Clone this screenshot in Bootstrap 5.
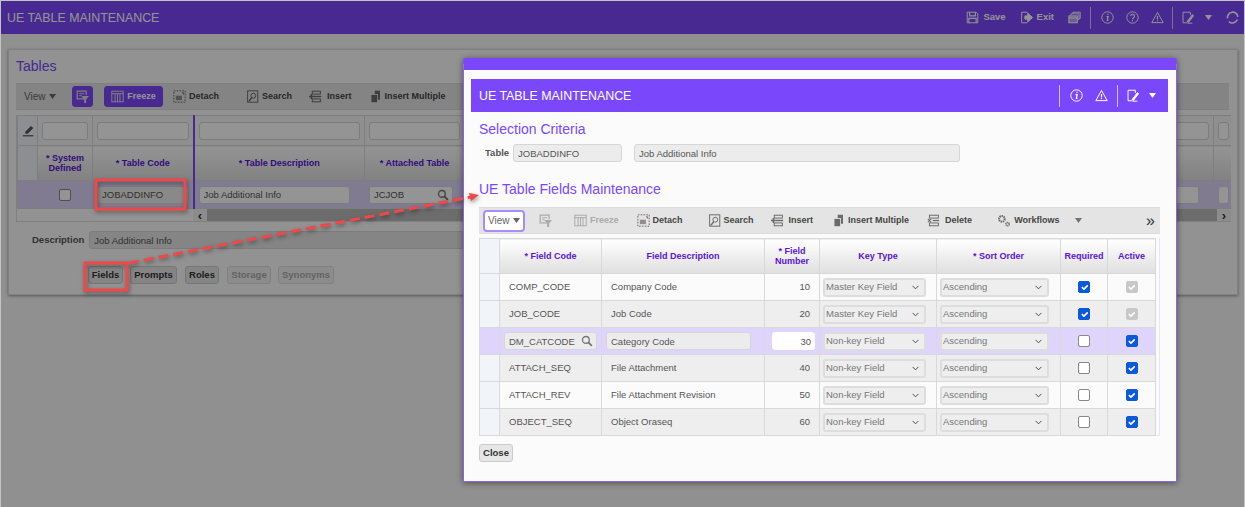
<!DOCTYPE html>
<html lang="en"><head><meta charset="utf-8"><title>UE Table Maintenance</title>
<link href="https://cdn.jsdelivr.net/npm/bootstrap@5.3.0/dist/css/bootstrap.min.css" rel="stylesheet">
<style>
html,body{margin:0;height:507px;overflow:hidden}
body{font-family:"Liberation Sans",Arial,sans-serif;font-size:9.5px;color:#555;background:#f8f9f8}
.stage{position:relative;width:1245px;height:507px;overflow:hidden;border:1px solid #c4c4c4;border-bottom:0}
.ic{width:13px;height:13px;flex:none;fill:none;stroke:currentColor;stroke-width:1.2}
.ic-w{width:15px}
.caret{width:7px;height:5px;flex:none;fill:currentColor}
.appbar{height:33px;background:#7a48fa;color:#fff;padding:0 0 0 6px;border:0}
.appbar .title{font-size:12.4px;line-height:1;color:#fff;margin-top:2px}
.appbar .act{font-weight:700;font-size:9.5px}
.vsep{width:1px;height:22px;background:#ffffffaa;flex:none}
.w-1{margin-left:9px}
.panel{margin:15px 6px 0 7px;height:246px;background:#fcfcfc;border:1px solid #ddd;border-radius:0;padding:7px 8px 0 7px;box-shadow:0 1px 3px #0006}
.h-title{font-size:14px;line-height:18px;color:#7a48fa;font-weight:400;margin:0}
.toolbar{background:#e4e4e4;height:27px;font-weight:700;font-size:9px;color:#444;border-top:1px solid #ddd;border-bottom:1px solid #ddd}
.tb{display:flex;align-items:center;gap:3px;color:#444;white-space:nowrap}
.tb.g5{gap:5px}
.tb .ic{color:#6a6a6a}
.tb.off,.tb.off .ic{color:#aaa}
.ml-4{margin-left:4px}.ml-8{margin-left:8px}.ml-10{margin-left:10px}.ml-11{margin-left:11px}.ml-12{margin-left:12px}.ml-13{margin-left:13px}.ml-14{margin-left:14px}.ml-16{margin-left:16px}.ml-17{margin-left:17px}.ml-18{margin-left:18px}.ml-19{margin-left:19px}.ml-22{margin-left:22px}.ml-24{margin-left:24px}.ml-25{margin-left:25px}.ml-27{margin-left:27px}
.mr-5{margin-right:5px}.mr-12{margin-right:12px}
.vbtn{width:42px;height:22px;background:#fff;border:2px solid #a98cf7;border-radius:4px;font-weight:400;color:#666;font-size:10px;padding:0 4px 0 3px;justify-content:space-between}
.vplain{width:40px;padding:0 0 0 8px;font-weight:400;color:#666;font-size:10px;justify-content:space-between}
.pbtn{background:#7a48fa;color:#fff;height:21px;border-radius:3px;border:1px solid #7a48fa;justify-content:center}
.pbtn .ic{color:#ddd}
.pbtn.sq{width:21px}
.pbtn.wide{width:59px}
.ue-grid{table-layout:fixed;border-collapse:collapse;margin:0;font-size:9.5px;--bs-table-bg:transparent;--bs-table-color:#555}
.fg{width:676px}
.bg{width:1216px}
.fg col:nth-child(1){width:20px}.fg col:nth-child(2){width:102px}.fg col:nth-child(3){width:163px}.fg col:nth-child(4){width:55px}.fg col:nth-child(5){width:117px}.fg col:nth-child(6){width:124px}.fg col:nth-child(7){width:47px}.fg col:nth-child(8){width:48px}
.bg col:nth-child(1){width:20px}.bg col:nth-child(2){width:55px}.bg col:nth-child(3){width:101px}.bg col:nth-child(4){width:171px}.bg col:nth-child(5){width:100px}.bg col:nth-child(6){width:749px}.bg col:nth-child(7){width:20px}
.ue-grid td,.ue-grid th{border:1px solid #d9d9d9;padding:0 9px;height:27px;vertical-align:middle;white-space:nowrap;overflow:hidden;box-shadow:none}
.ue-grid thead th{height:35px;background:linear-gradient(#fff,#dfdfdf);text-align:center;font-weight:700;font-size:9px;color:#5a14d8;line-height:10px;padding:0 2px;white-space:normal}
.ue-grid td.st,.ue-grid th.st{background:#f1f5fa;padding:0}
.ue-grid tr.alt td{background:#eee}
.ue-grid tr.sel td{background:#dfd5fc}
.ue-grid td.st{background:#f1f5fa!important}
.ue-grid tr.sel td.st{background:#dfd5fc!important}
.ue-grid td.num{text-align:right}
.ue-grid td.cb{text-align:center;padding:0}
.ue-grid td.sl{padding:0 0 0 3px}
.ue-grid td.ip{padding:0 4px}
.ue-grid td.ipn{padding:0 4px 0 7px}
.ue-grid td.ipd{padding:0 14px 0 4px}
.ue-grid td.ipj{padding:0 11px 0 4px}
.form-control.fld{font-size:9.5px;line-height:1;height:18px;min-height:0;padding:0 4px;background:#ececec;color:#555;border:1px solid #d6d6d6;border-radius:3px;box-shadow:none}
.form-control.fld.white{background:#fff;border-color:#fff;text-align:right;padding-right:3px}
.form-control.lite{background:#fff}
.form-control.cat{width:145px}
.search-in .form-control.fld{padding-right:19px}
.form-select.fs{font-size:9.5px;height:19px;min-height:0;padding:0 0 0 1px;background-color:#eee;color:#777;border:2px solid #ddd;border-radius:3px;background-size:9px 7px;background-position:right 4px center;box-shadow:none}
.k{width:103px}.s{width:109px}
.form-check-input.ck{width:12px;height:12px;margin:0;vertical-align:middle;border:1.5px solid #888;border-radius:2px;background-color:#fff;background-size:11px;float:none;display:inline-block;opacity:1}
.form-check-input.ck:checked{background-color:#0b5ad9;border-color:#0b5ad9}
.form-check-input.ck:disabled:checked{background-color:#c8c8c8;border-color:#c8c8c8;opacity:1}
.search-in{position:relative}
.search-in svg{position:absolute;right:4px;top:3px;width:12px;height:12px;color:#777}
.gridwrap{width:681px;border-right:1px solid #e3e9f1;margin-top:4px;height:198px;border-bottom:1px solid #e3e9f1}
.back-grid{overflow:hidden;margin-top:5px;width:1215px;height:107px;border-left:1px solid #ddd;border-bottom:1px solid #ddd}
.back-grid td.flt{height:30px;padding:0 4px;background:#f6f6f6}
.back-grid th{height:35px}
.back-grid td.rw{height:28px}
.back-grid .froz{border-right:2px solid #7a48fa}
.scrollrow{height:13px;display:flex;align-items:stretch;font-size:13px;line-height:1;font-weight:700;color:#333}
.scrollrow .pad{width:176px;background:#fbfbfb}
.scrollrow .arr{width:14px;display:flex;align-items:center;justify-content:center;background:#f1f1f1;overflow:visible}
.scrollrow .trk{flex:1;background:#bbb}
.lbl{font-weight:700;font-size:9.5px;color:#555;line-height:1}
.desc{margin-top:9px;padding-left:16px;gap:5px}
.desc .fld{width:1000px;background:#e6e6e6}
.btns{margin-top:17px;padding-left:72px;gap:7px}
.btn.mini{font-size:9.5px;font-weight:700;line-height:1;height:18px;padding:0;white-space:nowrap;background:#e6e6e6;color:#333;border:1px solid #ccc;border-radius:3px;--bs-btn-disabled-opacity:1}
.btn.mini:disabled{background:#f2f2f2;color:#aaa;border-color:#ddd}
.btn.mini.f{width:35px}.btn.mini.p{width:47px}.btn.mini.r{width:34px;margin-left:1px}.btn.mini.st{width:44px;margin-left:1px}.btn.mini.sy{width:56px}
.dim{position:absolute;inset:0;background:rgba(0,0,0,.42)}
.ue-modal{position:absolute;left:462px;top:57px;width:714px;height:424px;background:#fbfbfb;border:1px solid #8a63e8;border-top:12px solid #7a48fa;border-radius:2px 2px 0 0;box-shadow:0 1px 6px #0007;padding:9px 8px 0 7px}
.m-head{height:33px;background:#7a48fa;color:#fff;padding-left:8px}
.m-head .title{font-size:12.4px;color:#fff;line-height:1;margin-top:2px}
.m-body{padding:0 0 0 8px}
.m-sel{margin-top:8px}
.m-crit{margin-top:6px;padding-left:6px}
.m-crit .lbl{width:23px}
.m-crit .a{width:109px;margin-left:5px;height:18px}
.m-crit .b{width:326px;margin-left:12px;height:18px}
.m-fields{margin-top:18px}
.m-tool{width:681px;margin-top:9px}
.btn.mini.close-b{margin-top:8px;width:34px}
.chev{font-size:16px;font-weight:400;color:#333}
.notes{position:absolute;left:0;top:0;pointer-events:none;filter:drop-shadow(1px 2px 2px #0006)}
</style></head>
<body>
<svg width="0" height="0" class="position-absolute">
<symbol id="i-save" viewBox="0 0 16 16"><path d="M1.500 1.500h11l2 2v11h-13z"/><path d="M4.500 1.500v4.500h7V1.500M3.500 14.500V9h9v5.500" stroke-width="1.400"/></symbol>
<symbol id="i-exit" viewBox="0 0 16 16"><path d="M9 1.500H2v13h7"/><path fill="currentColor" d="M6 6h3.500V2.500L15.500 8l-6 5.500V10H6z"/></symbol>
<symbol id="i-stack" viewBox="0 0 16 16"><path d="M6 3V1.500h9V9h-1.500M3.500 5.500V3.500h10v7H12"/><rect x="1" y="6" width="10.500" height="8.500" fill="currentColor" fill-opacity=".5"/><path d="M1 8.500h10.500"/></symbol>
<symbol id="i-info" viewBox="0 0 16 16"><circle cx="8" cy="8" r="7"/><path d="M8.600 3.500v1.500M6.800 7h2l-1 4.500h1.400" stroke-width="1.500"/></symbol>
<symbol id="i-help" viewBox="0 0 16 16"><circle cx="8" cy="8" r="7"/><path d="M5.800 6.300a2.300 2.300 0 1 1 3.500 2c-.9.600-1.300 1-1.300 1.900M8 11v1.500" stroke-width="1.400"/></symbol>
<symbol id="i-warn" viewBox="0 0 16 16"><path d="M8 1.800 15 14.300H1z"/><path d="M8 6v4.500M8 11.300v1.400" stroke-width="1.400"/></symbol>
<symbol id="i-note" viewBox="0 0 16 16"><path d="M11.500 5V1.500h-9v13h5"/><path fill="currentColor" d="M7.500 13 14 4.500l1.500 1.200L9 14.300z"/><path d="M8 15h6"/></symbol>
<symbol id="i-refresh" viewBox="0 0 16 16"><path d="M2.500 5A6.500 6.500 0 0 1 13 3.500M14 10.500A6.500 6.500 0 0 1 3.500 13M2.500 5A6.500 6.500 0 0 0 2 9M13 3.500a6.500 6.500 0 0 1 1.500 4" stroke-width="2"/></symbol>
<symbol id="i-filter" viewBox="0 0 16 16"><path d="M10 11H1.500V1.500h11V6" stroke-width="1.500"/><path d="M4 4.500h6M4 7h3" /><path fill="currentColor" stroke="none" d="M6.500 7.500H16l-3.500 4V16h-2.500v-4.500z"/></symbol>
<symbol id="i-freeze" viewBox="0 0 16 16"><rect x="1" y="1.500" width="14" height="13"/><path d="M1 4.500h14M5 4.500v10M8 4.500v10M11 4.500v10"/></symbol>
<symbol id="i-detach" viewBox="0 0 16 16"><rect x="1" y="1" width="14" height="14" stroke-dasharray="2 1.500"/><path fill="currentColor" fill-opacity=".7" stroke="none" d="M3.500 7h7.500v5.500H3.500z"/><path d="M11 3.500h2v2"/></symbol>
<symbol id="i-search" viewBox="0 0 16 16"><rect x="2" y="1" width="12.500" height="14"/><circle cx="9" cy="7" r="3"/><path d="M7 9.500 3.500 14" stroke-width="1.800"/></symbol>
<symbol id="i-insert" viewBox="0 0 16 16"><rect x="4" y="1.500" width="10" height="3.500"/><rect x="4" y="11" width="10" height="3.500"/><path d="M6 8h9" stroke-width="1.800"/><path fill="currentColor" stroke="none" d="M0 7h2V5h2v2h2v2H4v2H2V9H0z"/></symbol>
<symbol id="i-multi" viewBox="0 0 16 16"><path fill="currentColor" stroke="none" d="M7 1h6.500v11H11V5H7z"/><path fill="currentColor" stroke="none" d="M3 6h7v9H3z"/></symbol>
<symbol id="i-delete" viewBox="0 0 16 16"><rect x="3" y="1.500" width="11" height="3.500"/><rect x="3" y="11" width="11" height="3.500"/><path d="M7 8h8" stroke-width="1.500"/><path d="m1 6 4 4M5 6l-4 4" stroke-width="1.300"/></symbol>
<symbol id="i-gears" viewBox="0 0 18 16"><circle cx="7" cy="6" r="3.500" stroke-width="2.500" stroke-dasharray="1.800 .8"/><circle cx="14" cy="12.500" r="2" stroke-width="2" stroke-dasharray="1.300 .6"/></symbol>
<symbol id="i-mag" viewBox="0 0 16 16"><circle cx="6.500" cy="6.500" r="4.500" stroke-width="1.800"/><path d="m10 10 4.500 4.500" stroke-width="2.400"/></symbol>
<symbol id="i-clear" viewBox="0 0 16 16"><path fill="currentColor" stroke="none" d="M4 9.500 11 2.500l3 2.500-7 7H4z"/><path d="M1 14.500h13" stroke-width="1.500"/></symbol>
<symbol id="i-caret" viewBox="0 0 7 5"><path d="M0 0h7L3.500 5z" stroke="none"/></symbol>
</svg>
<div class="stage">
  <nav class="navbar appbar d-flex align-items-center flex-nowrap">
    <span class="title">UE TABLE MAINTENANCE</span>
    <div class="d-flex align-items-center ms-auto mr-5 act">
      <svg class="ic"><use href="#i-save"/></svg><span class="ml-4">Save</span>
      <svg class="ic ml-14"><use href="#i-exit"/></svg><span class="ml-4">Exit</span>
      <svg class="ic ml-14"><use href="#i-stack"/></svg>
      <span class="vsep w-1"></span>
      <svg class="ic ml-10"><use href="#i-info"/></svg>
      <svg class="ic ml-12"><use href="#i-help"/></svg>
      <svg class="ic ml-12"><use href="#i-warn"/></svg>
      <span class="vsep ml-8"></span>
      <svg class="ic ml-8"><use href="#i-note"/></svg>
      <svg class="caret ml-11"><use href="#i-caret"/></svg>
      <svg class="ic ml-14"><use href="#i-refresh"/></svg>
    </div>
  </nav>
  <div class="panel card">
    <h2 class="h-title">Tables</h2>
    <div class="toolbar d-flex align-items-center mt-2">
      <div class="tb vplain">View <svg class="caret"><use href="#i-caret"/></svg></div>
      <div class="tb pbtn sq ml-16"><svg class="ic"><use href="#i-filter"/></svg></div>
      <div class="tb pbtn wide ml-11"><svg class="ic"><use href="#i-freeze"/></svg>Freeze</div>
      <div class="tb ml-10"><svg class="ic"><use href="#i-detach"/></svg>Detach</div>
      <div class="tb ml-27"><svg class="ic"><use href="#i-search"/></svg>Search</div>
      <div class="tb g5 ml-17"><svg class="ic"><use href="#i-insert"/></svg>Insert</div>
      <div class="tb ml-17"><svg class="ic"><use href="#i-multi"/></svg>Insert Multiple</div>
    </div>
    <div class="back-grid">
      <table class="table ue-grid bg">
        <colgroup><col><col><col><col><col><col><col></colgroup>
        <thead>
          <tr><td class="flt st text-center"><svg class="ic"><use href="#i-clear"/></svg></td><td class="flt"><input class="form-control fld lite" aria-label="filter"></td><td class="flt froz"><input class="form-control fld lite" aria-label="filter"></td><td class="flt"><input class="form-control fld lite" aria-label="filter"></td><td class="flt"><input class="form-control fld lite" aria-label="filter"></td><td class="flt"><input class="form-control fld lite" aria-label="filter"></td><td class="flt"><input class="form-control fld lite" aria-label="filter"></td></tr>
          <tr><th class="st"></th><th>* System Defined</th><th class="froz">* Table Code</th><th>* Table Description</th><th>* Attached Table</th><th></th><th></th></tr>
        </thead>
        <tbody>
          <tr class="sel"><td class="st rw"></td><td class="cb rw"><input class="form-check-input ck" type="checkbox" aria-label="System Defined"></td><td class="rw ip froz"><input class="form-control fld" value="JOBADDINFO" aria-label="Table Code" readonly></td><td class="rw ipd"><input class="form-control fld lite" value="Job Additional Info" aria-label="Table Description"></td><td class="rw ipj"><div class="search-in"><input class="form-control fld lite" value="JCJOB" aria-label="Attached Table"><svg class="ic"><use href="#i-mag"/></svg></div></td><td class="rw ipd"><input class="form-control fld lite" aria-label="Next value"></td><td class="rw ip"><input class="form-control fld lite" aria-label="Next value"></td></tr>
        </tbody>
      </table>
      <div class="scrollrow"><div class="pad"></div><div class="arr">‹</div><div class="trk"></div><div class="arr">›</div></div>
    </div>
    <div class="d-flex align-items-center desc"><span class="lbl">Description</span><input class="form-control fld" value="Job Additional Info" aria-label="Description" readonly></div>
    <div class="d-flex btns">
      <button class="btn mini f">Fields</button><button class="btn mini p">Prompts</button><button class="btn mini r">Roles</button><button class="btn mini st" disabled>Storage</button><button class="btn mini sy" disabled>Synonyms</button>
    </div>
  </div>
  <div class="dim"></div>
  <div class="ue-modal">
    <div class="m-head d-flex align-items-center">
      <span class="title">UE TABLE MAINTENANCE</span>
      <div class="d-flex align-items-center ms-auto">
        <span class="vsep"></span>
        <svg class="ic ml-10"><use href="#i-info"/></svg>
        <svg class="ic ml-12"><use href="#i-warn"/></svg>
        <span class="vsep w-1"></span>
        <svg class="ic ml-8"><use href="#i-note"/></svg>
        <svg class="caret ml-10 mr-12"><use href="#i-caret"/></svg>
      </div>
    </div>
    <div class="m-body">
      <h3 class="h-title m-sel">Selection Criteria</h3>
      <div class="d-flex align-items-center m-crit"><span class="lbl">Table</span><input class="form-control fld a" value="JOBADDINFO" aria-label="Table" readonly><input class="form-control fld b" value="Job Additional Info" aria-label="Table description" readonly></div>
      <h3 class="h-title m-fields">UE Table Fields Maintenance</h3>
      <div class="toolbar d-flex align-items-center m-tool">
        <div class="tb vbtn ml-4">View <svg class="caret"><use href="#i-caret"/></svg></div>
        <div class="tb off ml-14"><svg class="ic"><use href="#i-filter"/></svg></div>
        <div class="tb off ml-22"><svg class="ic"><use href="#i-freeze"/></svg>Freeze</div>
        <div class="tb ml-18"><svg class="ic"><use href="#i-detach"/></svg>Detach</div>
        <div class="tb ml-25"><svg class="ic"><use href="#i-search"/></svg>Search</div>
        <div class="tb g5 ml-17"><svg class="ic"><use href="#i-insert"/></svg>Insert</div>
        <div class="tb ml-19"><svg class="ic"><use href="#i-multi"/></svg>Insert Multiple</div>
        <div class="tb g5 ml-18"><svg class="ic"><use href="#i-delete"/></svg>Delete</div>
        <div class="tb ml-24"><svg class="ic ic-w"><use href="#i-gears"/></svg>Workflows</div>
        <svg class="caret ml-16 text-secondary"><use href="#i-caret"/></svg>
        <span class="ms-auto mr-5 chev lh-1">»</span>
      </div>
      <div class="gridwrap">
        <table class="table ue-grid fg">
          <colgroup><col><col><col><col><col><col><col><col></colgroup>
          <thead><tr><th class="st"></th><th>* Field Code</th><th>Field Description</th><th>* Field<br>Number</th><th>Key Type</th><th>* Sort Order</th><th>Required</th><th>Active</th></tr></thead>
          <tbody>
            <tr><td class="st"></td><td>COMP_CODE</td><td>Company Code</td><td class="num">10</td><td class="sl"><select class="form-select fs k" aria-label="Key Type"><option>Master Key Field</option></select></td><td class="sl"><select class="form-select fs s" aria-label="Sort Order"><option>Ascending</option></select></td><td class="cb"><input class="form-check-input ck" type="checkbox" checked aria-label="Required"></td><td class="cb"><input class="form-check-input ck" type="checkbox" checked disabled aria-label="Active"></td></tr>
            <tr class="alt"><td class="st"></td><td>JOB_CODE</td><td>Job Code</td><td class="num">20</td><td class="sl"><select class="form-select fs k" aria-label="Key Type"><option>Master Key Field</option></select></td><td class="sl"><select class="form-select fs s" aria-label="Sort Order"><option>Ascending</option></select></td><td class="cb"><input class="form-check-input ck" type="checkbox" checked aria-label="Required"></td><td class="cb"><input class="form-check-input ck" type="checkbox" checked disabled aria-label="Active"></td></tr>
            <tr class="sel"><td class="st"></td><td class="ip"><div class="search-in"><input class="form-control fld" value="DM_CATCODE" aria-label="Field Code"><svg class="ic"><use href="#i-mag"/></svg></div></td><td class="ip"><input class="form-control fld cat" value="Category Code" aria-label="Field Description"></td><td class="ipn"><input class="form-control fld white" value="30" aria-label="Field Number"></td><td class="sl"><select class="form-select fs k" aria-label="Key Type"><option>Non-key Field</option></select></td><td class="sl"><select class="form-select fs s" aria-label="Sort Order"><option>Ascending</option></select></td><td class="cb"><input class="form-check-input ck" type="checkbox" aria-label="Required"></td><td class="cb"><input class="form-check-input ck" type="checkbox" checked aria-label="Active"></td></tr>
            <tr class="alt"><td class="st"></td><td>ATTACH_SEQ</td><td>File Attachment</td><td class="num">40</td><td class="sl"><select class="form-select fs k" aria-label="Key Type"><option>Non-key Field</option></select></td><td class="sl"><select class="form-select fs s" aria-label="Sort Order"><option>Ascending</option></select></td><td class="cb"><input class="form-check-input ck" type="checkbox" aria-label="Required"></td><td class="cb"><input class="form-check-input ck" type="checkbox" checked aria-label="Active"></td></tr>
            <tr><td class="st"></td><td>ATTACH_REV</td><td>File Attachment Revision</td><td class="num">50</td><td class="sl"><select class="form-select fs k" aria-label="Key Type"><option>Non-key Field</option></select></td><td class="sl"><select class="form-select fs s" aria-label="Sort Order"><option>Ascending</option></select></td><td class="cb"><input class="form-check-input ck" type="checkbox" aria-label="Required"></td><td class="cb"><input class="form-check-input ck" type="checkbox" checked aria-label="Active"></td></tr>
            <tr class="alt"><td class="st"></td><td>OBJECT_SEQ</td><td>Object Oraseq</td><td class="num">60</td><td class="sl"><select class="form-select fs k" aria-label="Key Type"><option>Non-key Field</option></select></td><td class="sl"><select class="form-select fs s" aria-label="Sort Order"><option>Ascending</option></select></td><td class="cb"><input class="form-check-input ck" type="checkbox" aria-label="Required"></td><td class="cb"><input class="form-check-input ck" type="checkbox" checked aria-label="Active"></td></tr>
          </tbody>
        </table>
      </div>
      <button class="btn mini close-b">Close</button>
    </div>
  </div>
  <svg class="notes" width="1245" height="507" viewBox="0 0 1245 507">
    <rect x="95" y="179" width="89" height="29" fill="none" stroke="#f04848" stroke-width="3"/>
    <rect x="84" y="262" width="42" height="27" fill="none" stroke="#f04848" stroke-width="3"/>
    <path d="M128 262 470 196" stroke="#f04848" stroke-width="3" stroke-dasharray="10 5" fill="none"/>
    <path d="M478 194 468 192 470 200z" fill="#f04848"/>
  </svg>
</div>
</body></html>
